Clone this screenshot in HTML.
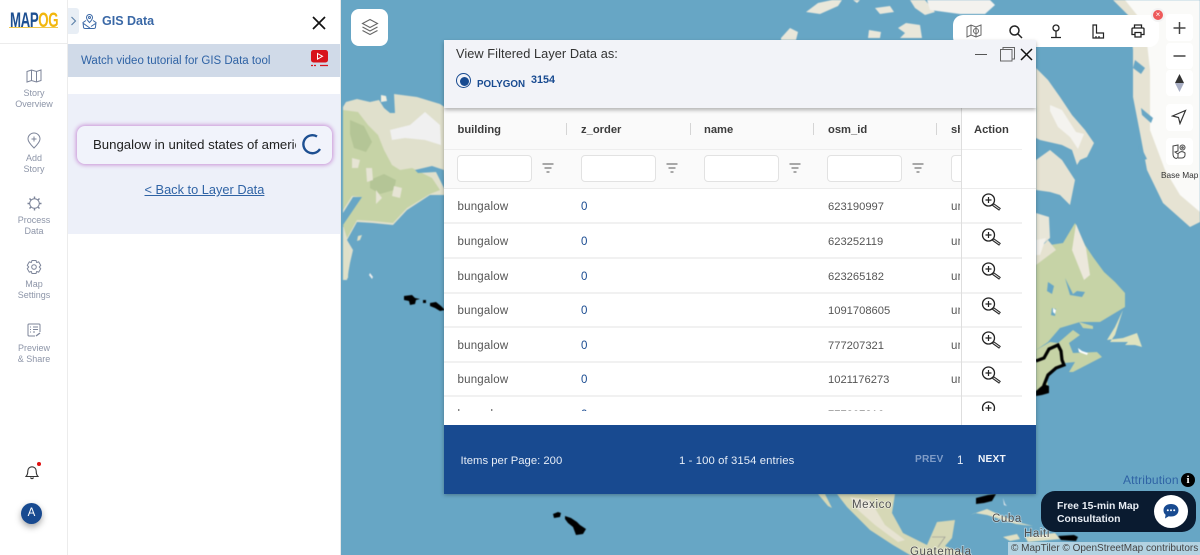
<!DOCTYPE html>
<html><head><meta charset="utf-8"><style>
html,body{margin:0;padding:0;width:1200px;height:555px;overflow:hidden;background:#67a6c5;font-family:"Liberation Sans",sans-serif}
.a{position:absolute;white-space:nowrap}
#map{position:absolute;left:341px;top:0;width:859px;height:555px;background:#67a6c5}
.nav{position:absolute;left:0;width:68px;text-align:center;font-size:9px;line-height:11px;color:#8d95a8}
.nav svg{display:block;margin:0 auto 3px}
.th{position:absolute;top:124px;font-size:11.2px;font-weight:bold;color:#3c3c3c;line-height:13px}
.sep{position:absolute;top:123px;width:1px;height:12px;background:#d5d5d5}
.inp{position:absolute;top:155px;height:25px;width:73px;background:#fff;border:1px solid #e2e2e2;border-radius:4px}
.fl{position:absolute;top:163px;width:12px;height:10px}
.line{position:absolute;left:444px;width:578px;height:2px;background:#f1f1f1}
.cell{position:absolute;font-size:11.5px;color:#555;letter-spacing:.2px;white-space:nowrap}
.n{letter-spacing:0;font-size:11.2px}
.z{color:#184a90}
.btn{position:absolute;left:1166px;width:27px;background:#fff;border-radius:4px}
.mg{position:absolute;left:981px;width:21px;height:18px}
</style></head><body>

<svg width="0" height="0" style="position:absolute"><symbol id="mag" viewBox="0 0 21 18"><g fill="none" stroke="#222"><path d="M12 11.500l7 5" stroke-width="3"/><path d="M12.500 11.800l6 4.300" stroke="#ddd" stroke-width="1"/><circle cx="7.500" cy="7" r="6" stroke-width="1.300" fill="#fff"/><path d="M4.500 7h6M7.500 4v6" stroke-width="1.200"/></g></symbol></svg>

<svg id="map" viewBox="341 0 859 555" xmlns="http://www.w3.org/2000/svg">
<g style="filter:blur(.6px)">
<!-- Alaska -->
<path fill="#e0e0cc" d="M346 102L357 99 370 102 379 100 384 108 390 113 395 113 394 94 417 97 440 104 446 108V195H430L407 210 393 225 373 223 357 222 347 240 353 250 350 263 347 280H343V227L365 197H353L343 213V107Z"/>
<path fill="#c6d3a6" d="M343 110L358 112 368 125 378 135 384 150 392 165 400 170 412 168 420 172 432 178 440 190 430 194 407 208 393 223 373 221 357 220 347 238 343 225 362 197 352 196 343 210Z"/>
<path fill="#b4c596" d="M350 120l14 6 8 16-6 10-12-4-4-14zM370 180l14-6 12 6-2 10-14 4-10-6z"/>
<path fill="#e6e4d4" d="M352 158l8 2-2 8-6 0zM366 168l6 0 1 12-6 2zM394 186l8 2-2 10-8-2zM376 190l6 8-6 6z"/>
<path fill="#f0f0f0" d="M390 130L410 125 425 112 440 125 441 145 425 140 405 138 392 140Z"/>
<path fill="#67a6c5" d="M415 170L432 166 444 170 445 190 436 172 418 173Z"/>
<path fill="#f0eee0" d="M381 95l5 1 1 5-6 1z"/>
<path fill="#dfe0c8" d="M358 236l4-1-2 5-3 1zM343 232l6 20-1 26-5 2z"/>
<path fill="#eee" d="M370 273l3 4-1 2-3-4z"/>
<!-- top islands -->
<path fill="#e9e7da" d="M806 12L818 3 832 0H842L838 6 820 14ZM781 38L790 28 798 32 796 40H781ZM853 0H860L857 3ZM869 30L881 32 880 38H868ZM898 28L906 23 920 25 922 38H900L905 33ZM875 8L890 6 894 12 880 14ZM910 0H925L935 12 925 15 915 8Z"/>
<path fill="#f3f2ee" d="M927 0H990L995 5 985 14H960L945 12 930 10Z"/>
<!-- Greenland -->
<path fill="#e6e3d3" d="M1113 0L1130 17 1133 50 1133 97 1140 133 1147 170 1163 203 1190 227 1200 222V0Z"/>
<path fill="#fafaf8" d="M1125 0L1145 25 1150 70 1150 130 1165 170 1180 195 1200 212V0Z"/>
<path fill="#67a6c5" d="M1135 60l10 8-4 6-8-6zM1141 108l12 10-2 5-9-8zM1140 145l7 14-3 1-5-12z"/>
<!-- Baffin -->
<path fill="#e6e3d3" d="M1036 68L1048 80 1060 97 1072 115 1085 130 1094 143 1087 157 1080 160 1077 165 1072 150 1062 145 1040 140 1036 138ZM1036 160L1050 150 1062 160 1075 180 1070 205 1060 195 1050 192 1036 190Z"/>
<path fill="#f4f3ef" d="M1050 105l12 5 14 22 8 2-6 15-8-12-12-10-8-16z"/>
<path fill="#e8e6d8" d="M1036 213L1049 217 1050 238 1036 250Z"/>
<!-- Quebec/Labrador -->
<path fill="#c6d3a6" d="M1036 257L1050 245 1063 243 1075 223 1085 245 1093 257 1104 272 1115 282 1125 293 1125 307 1100 322 1080 322 1060 328 1048 342 1036 350Z"/>
<path fill="#ece8dc" d="M1072 250L1076 224 1086 248 1090 275 1084 280 1078 265Z"/>
<path fill="#e5e2d0" d="M1036 252L1048 240 1056 250 1036 265Z"/>
<path fill="#f2f0ea" d="M1036 240L1046 238 1040 255 1036 255Z"/>
<path fill="#67a6c5" d="M1048 282l6 4-2 8-5-3zM1065 278l8 16 4-3 8 1-3 5-12-2zM1052 308l4 1-1 7-4-1z"/>
<path fill="#fff" d="M1053 308l3 2-1 4-2-2z"/>
<!-- Gulf south shore -->
<path fill="#c6d3a6" d="M1036 350L1050 342 1058 343 1073 330 1080 335 1069 343 1073 353 1097 352 1102 357 1073 372 1069 372 1075 362 1065 363 1047 377 1048 390 1036 395Z"/>
<path fill="#c6d3a6" d="M1079 322l14 4 0 3-10-1z"/>
<path fill="#dfe3bf" d="M1123 310L1115 327 1107 340 1123 338 1137 333 1142 347 1135 345 1125 345 1128 342 1110 342 1115 335Z"/>
<path fill="#fff" d="M1078 348l4 3 6 2-1 2-8-3z"/>
<path fill="none" stroke="#000" stroke-width="3.200" d="M1036 361L1044 358 1049 349 1058 345 1061 351 1062 360 1064 365 1056 368 1048 375 1044 385 1046 390"/>
<path d="M1036 391L1044 384 1049 386 1049 393 1042 395 1036 396Z"/>
<!-- Mexico -->
<path fill="#d6d8b6" d="M818 494L825 494 832 508 828 506ZM837 494H895L892 513 903 533 927 545 937 522 955 520 952 538 945 546 967 555H910L893 545 870 530 847 507Z"/>
<path fill="#e7e3d2" d="M850 497L870 500 885 525 905 540 898 542 875 525 858 510Z"/>
<path fill="none" stroke="#8b8b8b" stroke-width=".6" d="M932 537H945L938 547"/>
<path fill="#e1e0c3" d="M970 515L987 509 1000 515 1017 522 1033 526 1016 524 987 515 975 513Z"/>
<path fill="#e1e0c3" d="M1003 537l14-3 3 5-10 2zM1025 537l30-4 5 6-32 3z"/>
<path fill="#eee" d="M1003 498l2 6 2 2-3-1z"/>
<!-- black features -->
<path d="M404 296l8-1 3 3 5 1-4 1-1 4-5 1-1-4-5-1zM423 300l3 0 0 3-3 0zM430 303l6-1 5 4 4 4-5 1-5-3-5-2z"/>
<path d="M553 514l5-2 3 1-1 4-6 1zM565 516l6 2 6 4 3 3 6 4-3 5-7 1-3-8-5-4-3-4z"/>
<path d="M976 498l12-3 8-1-4 7-8 2-8 1z"/>
<path d="M1058 536l16-1 4 2-2 4-15-1z"/>
</g>
<g font-family="Liberation Sans,sans-serif" font-size="11.500" fill="#4f4f4f" stroke="#fff" stroke-opacity=".45" stroke-width="1.600" paint-order="stroke" letter-spacing=".6">
<text x="852" y="508">Mexico</text><text x="992" y="522">Cuba</text><text x="1024" y="537">Haiti</text><text x="910" y="555">Guatemala</text>
</g>
</svg>

<!-- map layers btn -->
<div class="a" style="left:351px;top:9px;width:37px;height:37px;background:#fff;border-radius:8px"></div>
<svg class="a" style="left:361px;top:18px" width="18" height="18" viewBox="0 0 18 18" fill="none" stroke="#666" stroke-width="1.100"><path d="M9 1.500L16.500 5.500 9 9.500 1.500 5.500Z"/><path d="M1.500 9L9 13 16.500 9"/><path d="M1.500 12.500L9 16.500 16.500 12.500"/></svg>

<!-- toolbar -->
<div class="a" style="left:953px;top:15px;width:206px;height:32px;background:#fff;border-radius:10px"></div>
<svg class="a" style="left:966px;top:24px" width="16" height="15" viewBox="0 0 16 15" fill="none" stroke="#666" stroke-width="1"><path d="M1 3l4-2 5 2 5-2v10l-5 2-5-2-4 2zM5 1v10M10 3v10"/><circle cx="10" cy="7" r="2.500"/></svg>
<svg class="a" style="left:1008px;top:24px" width="15" height="15" viewBox="0 0 15 15" fill="none" stroke="#222" stroke-width="1.500"><circle cx="6.500" cy="6.500" r="4.500"/><path d="M10 10l4 4"/></svg>
<svg class="a" style="left:1049px;top:24px" width="14" height="15" viewBox="0 0 14 15" fill="none" stroke="#222" stroke-width="1.300"><circle cx="7" cy="4" r="3"/><path d="M7 7v6M2 13.500h10"/></svg>
<svg class="a" style="left:1091px;top:24px" width="14" height="15" viewBox="0 0 14 15" fill="none" stroke="#222" stroke-width="1.200"><path d="M2 1h3.500v8H12.500v5H2zM5 12v2M8 12v2"/></svg>
<svg class="a" style="left:1131px;top:24px" width="14" height="14" viewBox="0 0 14 14" fill="none" stroke="#222" stroke-width="1.300"><path d="M3.500 4V1h7v3M3.500 10.500H1V5a1 1 0 0 1 1-1h10a1 1 0 0 1 1 1v5.500h-2.500"/><path fill="#fff" d="M4 8.500h6V13H4z"/></svg>
<div class="a" style="left:1151px;top:8px;width:10px;height:10px;border-radius:50%;background:#ee5a5a;border:2px solid #f3f3f3;color:#fff;font-size:8px;line-height:10px;text-align:center">×</div>

<!-- right controls -->
<div class="btn" style="top:14px;height:27px"></div>
<div class="btn" style="top:43px;height:26px"></div>
<div class="btn" style="top:70px;height:26px"></div>
<div class="btn" style="top:104px;height:27px"></div>
<div class="btn" style="top:138px;height:27px"></div>
<svg class="a" style="left:1171px;top:21px" width="17" height="15" stroke="#444" stroke-width="1.500"><path d="M8.500 1v12M2.500 7h12"/></svg>
<svg class="a" style="left:1171px;top:50px" width="17" height="13" stroke="#444" stroke-width="1.500"><path d="M2.500 6h12"/></svg>
<svg class="a" style="left:1173px;top:74px" width="13" height="18" viewBox="0 0 13 18"><path fill="#333" d="M6.500 0L11 9H2z"/><path fill="#a8aec4" d="M2 9h9L6.500 18z"/></svg>
<svg class="a" style="left:1171px;top:109px" width="16" height="16" viewBox="0 0 16 16" fill="none" stroke="#333" stroke-width="1.200"><path d="M1.500 7L14.500 1.500 9 14.500 7.500 8.500Z"/></svg>
<svg class="a" style="left:1172px;top:144px" width="14" height="15" viewBox="0 0 14 15" fill="none" stroke="#444" stroke-width="1"><path d="M1 2l5-1v6l-3 1 3 2v3a2 2 0 0 1-3 1c-2-1-2-3-2-4z"/><circle cx="10.500" cy="3.500" r="2.500"/><circle cx="10.500" cy="3.500" r=".8"/><path d="M6 10c2-3 5-3 7-1v2a3 3 0 0 1-3 3H6"/></svg>
<div class="a" style="left:1161px;top:170px;font-size:8.300px;color:#333">Base Map</div>

<!-- sidebar -->
<div class="a" style="left:0;top:0;width:68px;height:555px;background:#fff;border-right:1px solid #ececec;box-sizing:border-box"></div>
<div class="a" style="left:0;top:43px;width:67px;height:1px;background:#ececec"></div>
<div class="a" style="left:10px;top:10px;font-size:21px;font-weight:bold;letter-spacing:-.6px;transform:scaleX(.63);transform-origin:0 0;color:#1d4f91;line-height:22px">MAP<span style="color:#f2b70e">O</span><span style="color:#f2b70e">G</span></div>
<div class="a" style="left:9px;top:27px;width:49px;height:1px;background:#f2c94c"></div>

<div class="nav" style="top:69px"><svg width="16" height="14" viewBox="0 0 16 14" fill="none" stroke="#7c8499" stroke-width="1"><path d="M1 2.500l4.500-1.500 5 1.500L15 1v10.500L10.500 13l-5-1.500L1 13zM5.500 1v10.500M10.500 2.500V13"/></svg><div style="margin-top:5px">Story<br>Overview</div></div>
<div class="nav" style="top:132px"><svg width="14" height="17" viewBox="0 0 14 17" fill="none" stroke="#7c8499" stroke-width="1"><path d="M7 16C3 12 1 9.500 1 7a6 6 0 0 1 12 0c0 2.500-2 5-6 9z"/><path d="M7 4.500v5M4.500 7h5"/></svg><div style="margin-top:4px">Add<br>Story</div></div>
<div class="nav" style="top:196px"><svg width="15" height="15" viewBox="0 0 15 15" fill="none" stroke="#7c8499" stroke-width="1"><circle cx="7.500" cy="7.500" r="4.800"/><path stroke-width="1.400" d="M7.500 .5v2M7.500 12.500v2M.5 7.500h2M12.500 7.500h2M2.500 2.500l1.400 1.400M11.100 11.100l1.400 1.400M2.500 12.500l1.400-1.400M11.100 3.900l1.400-1.400"/></svg><div style="margin-top:4px">Process<br>Data</div></div>
<div class="nav" style="top:259px"><svg width="16" height="16" viewBox="0 0 16 16" fill="none" stroke="#7c8499" stroke-width="1"><path d="M6 1.500h4l.7 2 2-.6 2 3.400-1.400 1.700 1.400 1.700-2 3.400-2-.6-.7 2H6l-.7-2-2 .6-2-3.400 1.400-1.700L1.300 6.300l2-3.400 2 .6z"/><circle cx="8" cy="8" r="2.300"/></svg><div style="margin-top:4px">Map<br>Settings</div></div>
<div class="nav" style="top:323px"><svg width="14" height="14" viewBox="0 0 14 14" fill="none" stroke="#7c8499" stroke-width="1"><path d="M8 13H2a1 1 0 0 1-1-1V2a1 1 0 0 1 1-1h10a1 1 0 0 1 1 1v7"/><path d="M3 4h1M6 4h5M3 6.500h1M6 6.500h5M3 9h1M6 9h2"/><path stroke-width="1.300" d="M9 13l4-3"/></svg><div style="margin-top:6px">Preview<br>&amp; Share</div></div>

<svg class="a" style="left:25px;top:464px" width="14" height="16" viewBox="0 0 14 16" fill="none" stroke="#333" stroke-width="1.100"><path d="M1 12.500h12c-1.500-1.500-1.800-3-1.800-5.500a4.200 4.200 0 0 0-8.400 0c0 2.500-.3 4-1.800 5.500zM5.500 13.500a1.600 1.600 0 0 0 3 0"/></svg>
<div class="a" style="left:36.500px;top:462px;width:4px;height:4px;border-radius:50%;background:#e01010"></div>
<div class="a" style="left:21px;top:503px;width:21px;height:21px;border-radius:50%;background:#184a90;color:#fff;font-size:11.500px;line-height:21px;text-align:center;box-shadow:0 3px 7px rgba(0,0,0,.35)">A</div>

<!-- panel -->
<div class="a" style="left:68px;top:0;width:273px;height:555px;background:#fff;border-right:1px solid #e8e8e8;box-sizing:border-box"></div>
<div class="a" style="left:68px;top:8px;width:11px;height:26px;background:#e8eef5;border-radius:0 3px 3px 0"></div>
<svg class="a" style="left:70px;top:16px" width="7" height="10" fill="none" stroke="#5a7fa8" stroke-width="1.100"><path d="M1.500 1l4 4-4 4"/></svg>
<svg class="a" style="left:82px;top:13px" width="15" height="16" viewBox="0 0 15 16" fill="none" stroke="#3a68a6" stroke-width="1"><path d="M7.500 9.500C5.500 7.500 4.500 6 4.500 4.500a3 3 0 0 1 6 0c0 1.500-1 3-3 5z"/><circle cx="7.500" cy="4.500" r="1"/><path d="M4 7.500L1 9.500 1.500 14c0 1 1 1.500 2 1.500h8c1 0 2-.5 2-1.500l.5-4.500-3-2M1.500 10.500l7 5M13.500 10.500l-4.500 3"/></svg>
<div class="a" style="left:102px;top:14px;font-size:12.500px;font-weight:bold;color:#3a68a6;line-height:14px">GIS Data</div>
<svg class="a" style="left:312px;top:16px" width="14" height="14" stroke="#111" stroke-width="1.700"><path d="M1 1l12 12M13 1L1 13"/></svg>

<div class="a" style="left:68px;top:44px;width:272px;height:33px;background:#d0dae8"></div>
<div class="a" style="left:81px;top:54px;font-size:11.500px;color:#2f63a5;line-height:14px">Watch video tutorial for GIS Data tool</div>
<svg class="a" style="left:311px;top:50px" width="17" height="17" viewBox="0 0 17 17"><rect width="17" height="12.500" rx="2.500" fill="#d8131b"/><path d="M6.500 3.500l5 2.800-5 2.800z" fill="none" stroke="#fff" stroke-width="1"/><path d="M0 15.500h2M3 15.500h2M9 15.500h8" stroke="#d8131b" stroke-width="1.300"/></svg>

<div class="a" style="left:68px;top:94px;width:272px;height:140px;background:#edf0f9"></div>
<div class="a" style="left:77px;top:126px;width:255px;height:38px;background:#f1f3fb;border-radius:8px;box-shadow:0 0 4px 1px #c88fd6"></div>
<div class="a" style="left:93px;top:137px;width:203px;overflow:hidden;font-size:13.200px;line-height:16px;color:#222">Bungalow in united states of america</div>
<svg class="a" style="left:300px;top:133px" width="22" height="24" viewBox="0 0 22 24" fill="none" stroke="#1d4f91" stroke-width="2.400"><path d="M17 3.500A9 9 0 1 0 20 16"/></svg>
<div class="a" style="left:144.500px;top:182px;font-size:12.800px;line-height:16px;color:#2f63a5;text-decoration:underline">&lt; Back to Layer Data</div>

<!-- modal -->
<div class="a" style="left:444px;top:108px;width:592px;height:386px;background:#fff;box-shadow:0 1px 4px rgba(0,0,0,.3)"></div>
<div class="a" style="left:444px;top:40px;width:592px;height:68px;background:#f2f3f8;box-shadow:0 2px 4px rgba(0,0,0,.3);z-index:3"></div>
<div class="a" style="z-index:4;left:456px;top:46px;font-size:12.800px;line-height:16px;color:#333;letter-spacing:.05px">View Filtered Layer Data as:</div>
<div class="a" style="z-index:4;left:456px;top:73px;width:13px;height:13px;border:1.500px solid #184a90;border-radius:50%"></div>
<div class="a" style="z-index:4;left:459.500px;top:76.500px;width:9px;height:9px;background:#184a90;border-radius:50%"></div>
<div class="a" style="z-index:4;left:477px;top:79px;font-size:9.800px;line-height:12px;font-weight:bold;color:#184a90">POLYGON</div>
<div class="a" style="z-index:4;left:531px;top:74px;font-size:10.800px;line-height:12px;font-weight:bold;color:#184a90">3154</div>
<div class="a" style="z-index:4;left:975px;top:53.500px;width:12px;height:1.500px;background:#555"></div>
<svg class="a" style="z-index:4;left:1000px;top:47px" width="15" height="15" fill="none" stroke="#666" stroke-width="1"><rect x=".5" y="2.500" width="11.500" height="11.500"/><path d="M3 2.500V.5h11.500V12H12"/></svg>
<svg class="a" style="z-index:4;left:1020px;top:48px" width="13" height="13" stroke="#111" stroke-width="1.500"><path d="M1 1l11 11M12 1L1 12"/></svg>

<div class="a" style="left:444px;top:108px;width:517px;height:41px;background:#fafafa"></div>
<div class="a" style="left:444px;top:149px;width:578px;height:1px;background:#eee"></div>
<div class="a" style="left:444px;top:150px;width:517px;height:38px;background:#fafafa"></div>
<div class="a" style="left:444px;top:188px;width:592px;height:1px;background:#ececec"></div>

<div class="th" style="left:457.500px">building</div><div class="sep" style="left:566px"></div>
<div class="th" style="left:581px">z_order</div><div class="sep" style="left:690px"></div>
<div class="th" style="left:704px">name</div><div class="sep" style="left:813px"></div>
<div class="th" style="left:828px">osm_id</div><div class="sep" style="left:936px"></div>
<div class="th" style="left:951px;width:9px;overflow:hidden">shape</div>
<div class="th" style="left:974px">Action</div>

<div class="inp" style="left:457px"></div>
<div class="inp" style="left:581px"></div>
<div class="inp" style="left:704px"></div>
<div class="inp" style="left:827px"></div>
<div class="inp" style="left:951px;width:9px;border-right:0;border-radius:4px 0 0 4px"></div>
<svg class="fl" style="left:542px" viewBox="0 0 12 10" stroke="#555" stroke-width="1.100"><path d="M.5 1h11M2.500 5h7M4.500 9h3"/></svg>
<svg class="fl" style="left:666px" viewBox="0 0 12 10" stroke="#555" stroke-width="1.100"><path d="M.5 1h11M2.500 5h7M4.500 9h3"/></svg>
<svg class="fl" style="left:789px" viewBox="0 0 12 10" stroke="#555" stroke-width="1.100"><path d="M.5 1h11M2.500 5h7M4.500 9h3"/></svg>
<svg class="fl" style="left:912px" viewBox="0 0 12 10" stroke="#555" stroke-width="1.100"><path d="M.5 1h11M2.500 5h7M4.500 9h3"/></svg>

<div class="line" style="top:222px"></div>
<div class="line" style="top:257px"></div>
<div class="line" style="top:291.500px"></div>
<div class="line" style="top:326px"></div>
<div class="line" style="top:360.500px"></div>
<div class="line" style="top:395px"></div>

<div class="a" id="rows" style="left:0;top:0;width:1200px;height:411px;overflow:hidden">
<div class="cell" style="left:457.500px;top:201px">bungalow</div><div class="cell z" style="left:581px;top:201px">0</div><div class="cell n" style="left:828px;top:201px">623190997</div><div class="cell" style="left:951px;top:201px;width:9px;overflow:hidden">unknown</div>
<div class="cell" style="left:457.500px;top:236px">bungalow</div><div class="cell z" style="left:581px;top:236px">0</div><div class="cell n" style="left:828px;top:236px">623252119</div><div class="cell" style="left:951px;top:236px;width:9px;overflow:hidden">unknown</div>
<div class="cell" style="left:457.500px;top:270.500px">bungalow</div><div class="cell z" style="left:581px;top:270.500px">0</div><div class="cell n" style="left:828px;top:270.500px">623265182</div><div class="cell" style="left:951px;top:270.500px;width:9px;overflow:hidden">unknown</div>
<div class="cell" style="left:457.500px;top:305px">bungalow</div><div class="cell z" style="left:581px;top:305px">0</div><div class="cell n" style="left:828px;top:305px">1091708605</div><div class="cell" style="left:951px;top:305px;width:9px;overflow:hidden">unknown</div>
<div class="cell" style="left:457.500px;top:340px">bungalow</div><div class="cell z" style="left:581px;top:340px">0</div><div class="cell n" style="left:828px;top:340px">777207321</div><div class="cell" style="left:951px;top:340px;width:9px;overflow:hidden">unknown</div>
<div class="cell" style="left:457.500px;top:374px">bungalow</div><div class="cell z" style="left:581px;top:374px">0</div><div class="cell n" style="left:828px;top:374px">1021176273</div><div class="cell" style="left:951px;top:374px;width:9px;overflow:hidden">unknown</div>
<div class="cell" style="left:457.500px;top:408.500px">bungalow</div><div class="cell z" style="left:581px;top:408.500px">0</div><div class="cell n" style="left:828px;top:408.500px">777207316</div>
<svg class="mg" style="top:193px"><use href="#mag"/></svg>
<svg class="mg" style="top:228px"><use href="#mag"/></svg>
<svg class="mg" style="top:262px"><use href="#mag"/></svg>
<svg class="mg" style="top:297px"><use href="#mag"/></svg>
<svg class="mg" style="top:331px"><use href="#mag"/></svg>
<svg class="mg" style="top:366px"><use href="#mag"/></svg>
<svg class="mg" style="top:401px"><use href="#mag"/></svg>
</div>
<div class="a" style="left:960.500px;top:108px;width:1px;height:317px;background:#dedede"></div>

<!-- footer -->
<div class="a" style="left:444px;top:425px;width:592px;height:69px;background:#184a90"></div>
<div class="a" style="left:460.500px;top:454px;font-size:11.300px;line-height:14px;color:#e6edf7">Items per Page: 200</div>
<div class="a" style="left:679px;top:454px;font-size:11.300px;line-height:14px;color:#e6edf7;letter-spacing:.1px">1 - 100 of 3154 entries</div>
<div class="a" style="left:915px;top:453px;font-size:10.200px;line-height:14px;font-weight:bold;color:#7f9cc7;letter-spacing:.2px">PREV</div>
<div class="a" style="left:957px;top:454px;font-size:11.500px;line-height:14px;color:#e6edf7">1</div>
<div class="a" style="left:978px;top:453px;font-size:10.200px;line-height:14px;font-weight:bold;color:#f0f4fa;letter-spacing:.2px">NEXT</div>

<!-- attribution & cta -->
<div class="a" style="left:1123px;top:473px;font-size:12px;line-height:14px;color:#2f63a5;letter-spacing:.15px">Attribution</div>
<div class="a" style="left:1181px;top:473px;width:14px;height:14px;border-radius:50%;background:#000;color:#fff;font:bold 11px/14px 'Liberation Serif',serif;text-align:center">i</div>
<div class="a" style="left:1041px;top:491px;width:155px;height:41px;background:#0a1b30;border-radius:14px"></div>
<div class="a" style="left:1057px;top:500px;font-size:10.400px;line-height:13px;font-weight:bold;color:#e8edf4">Free 15-min Map<br>Consultation</div>
<div class="a" style="left:1154px;top:495px;width:34px;height:33px;border-radius:50%;background:#fff"></div>
<svg class="a" style="left:1163px;top:504px" width="16" height="15" viewBox="0 0 16 15"><path fill="#184a90" d="M8 0c4.400 0 7.500 2.600 7.500 6.200S12.400 12.500 8 12.500c-.8 0-1.500-.1-2.200-.3L2 14.500l.6-3.700C1.200 9.700.5 8 .5 6.200.5 2.600 3.600 0 8 0z"/><circle cx="4.800" cy="6.300" r="1" fill="#fff"/><circle cx="8" cy="6.300" r="1" fill="#fff"/><circle cx="11.200" cy="6.300" r="1" fill="#fff"/></svg>
<div class="a" style="left:1008px;top:542px;width:192px;height:13px;background:rgba(255,255,255,.5)"></div>
<div class="a" style="left:1011px;top:542px;font-size:10px;line-height:13px;color:#444">© MapTiler © OpenStreetMap contributors</div>

</body></html>
